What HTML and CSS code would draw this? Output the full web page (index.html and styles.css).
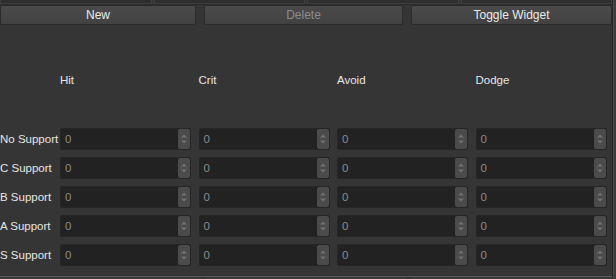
FILE: index.html
```html
<!DOCTYPE html>
<html lang="en">
<head>
  <meta charset="UTF-8" />
  <title>Support Bonuses</title>
  <link rel="stylesheet" href="styles.css">
</head>
<body>
  <div class="frame">
    <div class="panel">
      <div class="top-strip">
        <span></span><span></span><span></span><span></span>
      </div>
      <div class="toolbar">
        <button class="btn">New</button>
        <button class="btn" disabled>Delete</button>
        <button class="btn">Toggle Widget</button>
      </div>
      <div class="table">
        <div class="head"></div>
        <div class="head">Hit</div>
        <div class="head">Crit</div>
        <div class="head">Avoid</div>
        <div class="head">Dodge</div>
      </div>
      <div class="table rows" id="rows"></div>
      <div class="bottom-strip">
        <span></span><span></span><span></span>
      </div>
    </div>
    <div class="edge"></div>
  </div>
  <script>
    const rows = document.getElementById("rows");
    const names = ["No Support", "C Support", "B Support", "A Support", "S Support"];
    names.forEach(function (n) {
      const label = document.createElement("div");
      label.className = "row-label";
      label.textContent = n;
      rows.appendChild(label);
      for (let i = 0; i < 4; i++) {
        const spin = document.createElement("div");
        spin.className = "spin";
        spin.innerHTML = `
          <span class="value">0</span>
          <span class="arrows">
            <svg width="8" height="14" viewBox="0 0 8 14"><path d="M1 5.5 L4 2.5 L7 5.5 Z M1 8.5 L4 11.5 L7 8.5 Z" fill="#707070"/></svg>
          </span>`;
        rows.appendChild(spin);
      }
    });
  </script>
</body>
</html>
```

FILE: styles.css
```css
body { margin: 0; background: #353535; font-family: "Liberation Sans", Arial, sans-serif; font-size: 11px; color: #e6e6e6; overflow: hidden; }
.frame { display: flex; width: 616px; height: 279px; }
.panel { width: 612px; display: flex; flex-direction: column; border-right: 1px solid #262626; }
.edge { flex: 1; background: #3c3c3c; border-left: 1px solid #4a4a4a; }

.top-strip { height: 4px; display: flex; gap: 2px; border-bottom: 1px solid #2a2a2a; }
.top-strip span { flex: 1; background: #2e2e2e; border: 1px solid #3f3f3f; border-top: none; }

.toolbar { display: grid; grid-template-columns: 196px 199px 201px; column-gap: 8px; }
.btn { height: 20px; margin: 0; padding: 0; background: linear-gradient(#4a4a4a, #424242); border: 1px solid #2b2b2b; border-radius: 2px; color: #eaeaea; font-family: inherit; font-size: 12px; }
.btn:disabled { color: #8c8c8c; }

.table { display: grid; grid-template-columns: 52.5px repeat(4, 131px); column-gap: 7.5px; width: 606px; }
.head { padding-top: 49px; height: 54px; font-size: 11.5px; }

.rows { row-gap: 7px; }
.row-label { display: flex; align-items: center; height: 22px; white-space: nowrap; font-size: 11.5px; }
.spin { display: flex; align-items: center; height: 20px; background: #222222; border: 1px solid #262626; border-radius: 2px; }
.value { flex: 1; padding-left: 4px; color: #8a8a8a; font-size: 11.5px; }
.arrows { display: flex; align-items: center; justify-content: center; width: 12px; height: 20px; background: #4b4b4b; border-radius: 2px; }

.bottom-strip { margin-top: auto; height: 2px; display: flex; gap: 6px; border-top: 1px solid #5a5a5a; }
.bottom-strip span { flex: 1; background: #3a3a3a; }
```
